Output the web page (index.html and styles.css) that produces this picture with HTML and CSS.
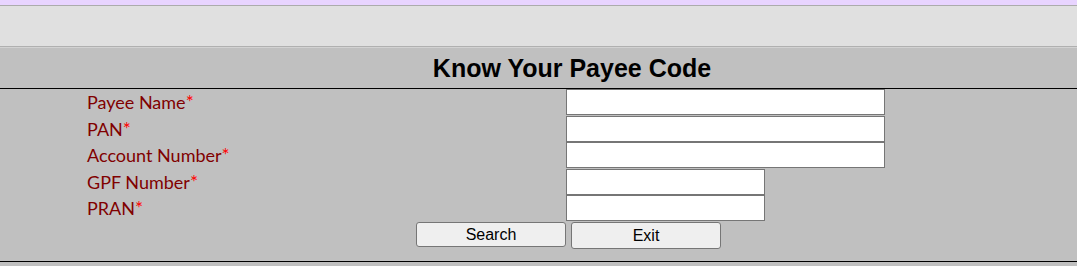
FILE: index.html
```html
<!DOCTYPE html>
<html>
<head>
<meta charset="utf-8">
<link rel="stylesheet" href="styles.css">
</head>
<body>
<div class="topstrip"></div>
<div class="toolbar"></div>
<div class="panel">
  <div class="title">Know Your Payee Code</div>
  <div class="form">
    <div class="row r1"><label class="lbl">Payee Name<span class="req">*</span></label><input class="inp wide" type="text"></div>
    <div class="row r2"><label class="lbl">PAN<span class="req">*</span></label><input class="inp wide" type="text"></div>
    <div class="row r3"><label class="lbl">Account Number<span class="req">*</span></label><input class="inp wide" type="text"></div>
    <div class="row r4"><label class="lbl">GPF Number<span class="req">*</span></label><input class="inp narrow" type="text"></div>
    <div class="row r5"><label class="lbl">PRAN<span class="req">*</span></label><input class="inp narrow" type="text"></div>
    <div class="buttons">
      <button class="btn search" type="button">Search</button>
      <button class="btn exit" type="button">Exit</button>
    </div>
  </div>
  <div class="foot"></div>
</div>
</body>
</html>
```

FILE: styles.css
```css
html, body {
  margin: 0;
  padding: 0;
  background: #ffffff;
}
.topstrip {
  height: 5px;
  background: #e8d4ff;
  border-bottom: 1px solid #acacac;
}
.toolbar {
  height: 40px;
  background: #e0e0e0;
  border-bottom: 1px solid #b0b0b0;
}
.panel {
  background: #c0c0c0;
  border-top: 1px solid #d2d2d2;
}
.title {
  height: 41px;
  box-sizing: border-box;
  border-bottom: 1px solid #000;
  padding-left: 67px;
  padding-top: 1px;
  text-align: center;
  font-family: "Liberation Sans", Arial, sans-serif;
  font-weight: bold;
  font-size: 25px;
  line-height: 38px;
  color: #000;
}
.form {
  border-bottom: 1px solid #000;
  padding-bottom: 12px;
}
.row {
  display: flex;
  align-items: flex-start;
  height: 26px;
}
.r1, .r3 { height: 27px; }
.lbl {
  width: 479px;
  padding-left: 87px;
  height: 26px;
  line-height: 26px;
  font-family: Lato, "Open Sans", sans-serif;
  font-size: 18px;
  color: #800000;
}
.req {
  color: #ff0000;
  font-size: 19px;
  line-height: 0;
}
.inp {
  box-sizing: border-box;
  height: 26px;
  margin: 0;
  border: 1px solid #767676;
  background: #fff;
  padding: 0 2px;
}
.wide { width: 319px; }
.narrow { width: 199px; }
.buttons {
  display: flex;
  align-items: flex-start;
  gap: 5px;
  padding-left: 416px;
  margin-top: 1px;
}
.btn {
  box-sizing: border-box;
  width: 150px;
  margin: 0;
  border: 1px solid #767676;
  border-radius: 3px;
  background: #efefef;
  font-family: "Liberation Sans", Arial, sans-serif;
  font-size: 16px;
  color: #000;
  padding: 0;
}
.search { height: 25px; }
.exit { height: 27px; padding-top: 1px; }
.foot {
  height: 4px;
}
```
